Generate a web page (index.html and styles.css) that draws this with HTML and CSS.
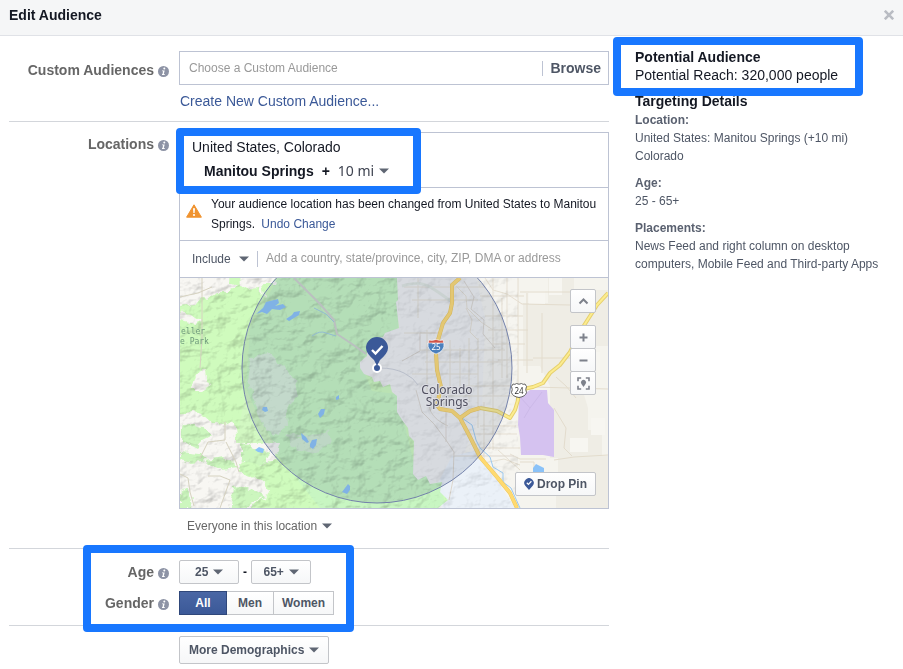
FILE: index.html
```html
<!DOCTYPE html>
<html lang="en">
<head>
<meta charset="utf-8">
<title>Edit Audience</title>
<meta name="viewport" content="width=device-width, initial-scale=1">
<link rel="stylesheet" href="styles.css">
</head>
<body>
<svg width="0" height="0" class="sprite" aria-hidden="true">
  <symbol id="caret" viewBox="0 0 10 6"><path d="M0 0.5h10L5 5.5z" fill="currentColor"/></symbol>
  <symbol id="info" viewBox="0 0 11 11"><circle cx="5.5" cy="5.5" r="5.5" fill="#8d93a5"/><circle cx="6.3" cy="2.6" r="1" fill="#fff"/><path d="M4 4.4h2.7L5.8 8h.9v.9H4V8h.5l.6-2.7H4z" fill="#fff"/></symbol>
</svg>

<header class="titlebar">
  <h1>Edit Audience</h1>
  <button class="close" type="button" aria-label="Close">
    <svg width="10" height="10" viewBox="0 0 10 10"><path d="M.8 .8l8.400 8.400M9.200 .8L.8 9.200" stroke="#b9bcc3" stroke-width="2.6"/></svg>
  </button>
</header>

<main class="dialog">
  <form class="form">
    <section class="row row-custom">
      <label class="label label-tall" for="custom">Custom Audiences <svg class="info"><use href="#info"/></svg></label>
      <div class="field">
        <div class="picker">
          <input id="custom" type="text" placeholder="Choose a Custom Audience">
          <button class="browse" type="button">Browse</button>
        </div>
        <a class="create" href="#">Create New Custom Audience...</a>
      </div>
    </section>

    <section class="row row-locations">
      <label class="label" for="place">Locations <svg class="info"><use href="#info"/></svg></label>
      <div class="field">
        <div class="locations">
          <div class="chosen callout">
            <div class="region">United States, Colorado</div>
            <div class="city">
              <strong>Manitou Springs</strong><strong>+</strong>
              <span class="select select-radius">
                <select aria-label="Radius"><option>10 mi</option><option>25 mi</option></select>
                <svg class="caret"><use href="#caret"/></svg>
              </span>
            </div>
          </div>
          <div class="notice">
            <svg class="warn" width="16" height="14" viewBox="0 0 16 14"><path d="M8 .8L15.4 13.2H.6z" fill="#f0932f" stroke="#f0932f" stroke-linejoin="round"/><path d="M7 4.2h2L8.6 9H7.4z" fill="#fff"/><circle cx="8" cy="11" r="1.1" fill="#fff"/></svg>
            <p>Your audience location has been changed from United States to Manitou Springs. <a href="#">Undo Change</a></p>
          </div>
          <div class="search">
            <span class="select select-include">
              <select aria-label="Include or exclude"><option>Include</option><option>Exclude</option></select>
              <svg class="caret"><use href="#caret"/></svg>
            </span>
            <input id="place" type="text" placeholder="Add a country, state/province, city, ZIP, DMA or address">
          </div>
          <div class="map">
            <svg class="map-art" viewBox="0 0 428 230" preserveAspectRatio="xMidYMid slice" role="img" aria-label="Map of Colorado Springs">
              <defs>
                <filter id="relief" x="0" y="0" width="100%" height="100%" color-interpolation-filters="sRGB">
                  <feTurbulence type="fractalNoise" baseFrequency="0.05 0.065" numOctaves="4" seed="8"/>
                  <feColorMatrix values="0 0 0 0 0  0 0 0 0 0  0 0 0 0 0  1.2 0 0 0 0"/>
                  <feDiffuseLighting surfaceScale="4" diffuseConstant="1.25" lighting-color="#fff"><feDistantLight azimuth="225" elevation="52"/></feDiffuseLighting>
                </filter>
                <filter id="ragged"><feTurbulence type="fractalNoise" baseFrequency="0.12" numOctaves="2" seed="3"/><feDisplacementMap in="SourceGraphic" scale="9" xChannelSelector="R" yChannelSelector="G"/></filter>
                <clipPath id="hills"><path d="M0 0H217L218 22 216 24 219 50 205 55 203 59 198 60 190 66 187 70 187 78 180 84 180 90 184 96 192 99 194 104 200 103 203 109 210 106 212 114 217 118 217 134 222 142 228 150 229 158 234 163 233 196 238 202 246 198 250 206 262 204 260 214 268 222 258 230H0z"/></clipPath>
                <clipPath id="town"><path d="M218 0H428V230H258L268 222 262 206 246 200 234 198 233 160 228 150 218 132 215 118 200 106 182 94 180 84 190 66 218 50z"/></clipPath>
              </defs>
              <rect width="428" height="230" fill="#f5f4ee"/>
              <path d="M216 0H296L305 40 302 130 262 230H160V60z" fill="#efeff0"/>
              <path d="M272 178L298 172 335 230H262L258 205z" fill="#e9f0f7"/>
              <g fill="#efede5">
                <path d="M343 25h25V0h26v12h34v56h-32v22l12 40v22h14v50h-44v-22h-8V108l-10-20h-17z"/>
                <path d="M384 178h44v52h-52v-20h8z"/>
              </g>
              <g fill="#f7f6f1"><path d="M349 13h16v13h-16zM369 0h13v17h-13zM402 74h18v18h-18zM411 140h14v17h-14zM390 160h18v14h-18z"/></g>

              <g fill="none" stroke="#e3dccd" stroke-width="1">
                <path d="M224 9h82M232 22h66M224 55h32M240 72h85M245 84h76M232 96h66M285 108h53M262 118h74M300 18h44M305 38h38M308 52h40M312 66h33M318 82h35M300 148h36M282 156h55M300 170h40"/>
                <path d="M238 0v40M247 52v62M270 62v54M280 70v45M289 60v64M298 60v90M304 124v62M313 0v172M322 20v80M327 0v100M338 0v108M347 15v80M362 95v-60M318 172l22 20M340 184h14v26h26M374 182l20-3 34-2M396 120l-10-12-10-9M374 130l12 20-2 20 8 8M353 80h38v-14M340 14h52l10 14M353 109l75 2"/>
                <path d="M276 8l10 10 1 12 14 14 12 8M286 30l6 12-2 12 8 8M304 185l20-4 16 6M305 0l8 12 14 4 15 10 48 1M330 176l10 5h26"/>
              </g>
              <g fill="none" stroke="#d8d1c7" stroke-width="1">
                <path d="M284 3l10 16-3 12 13 11-1 14 12 14M236 112l6 22 12 12 12 16 8 12-1 28-4 20M274 178h60M266 134v30M252 116q-10 20 16 32"/>
                <path d="M262 55h-22v18l-18 10"/>
              </g>
              <path d="M222 8q18-6 30 2t20 14" fill="none" stroke="#dfe5dd" stroke-width="3"/>
              <g clip-path="url(#town)"><rect class="shade shade-soft" width="160" height="230" x="178" filter="url(#relief)"/></g>

              <g clip-path="url(#hills)">
                <rect width="270" height="230" fill="#cffbbd"/>
                <path d="M98 0h120v50l-38 34 12 29 25 3 18 73 25 16 6 25H140L92 170 66 110 70 50z" fill="#c8f6c2"/>
                <g filter="url(#ragged)">
                  <path d="M72 78l16-4 12 12 14 14 4 18-12 12 2 16-10 12-12-4-12-32-6-20z" fill="#d9f0d9"/>
                  <path d="M106 156l14 2 20-2 8-6 2 16-18 10-20-8z" fill="#d3eed2"/>
                  <g fill="#f8f7f3">
                    <path d="M-8-8h58l-1 12 9 3-8 6-12 0-8 7-7-1-4 6-9 2-18 4z"/>
                    <path d="M60-6h40l-5 12-13 0 2 12-7-8-10 2-6-4z"/>
                    <path d="M12 112l5-17 8-4 1 9 4 7-8 5zM-6 34l18 2 8 6-4 4-22-4z"/>
                    <path d="M-8 136l22-2 9 3 9 8 13 1 9-4 2 18 1 5h18l25-1-4 18-18 4-16-2-3 10 20 7 10 9-4 10-10 4-12 18H-8z"/>
                  </g>
                  <g fill="#ccf6be">
                    <path d="M2 148l6-4 6 4 12 3 6 7-10 5-6 7-8-4-6-5zM0 174l20 2 7 6-15 2-12-3zM26 183l15-3 12 3 7 6-20 2zM62 165l16 6 12 4-4 9-16 4-8-7zM0 215l6-4 8 10-6 9H0zM54 210l10-2 22 10-16 7-12 7-8 0z"/>
                  </g>
                </g>
                <path d="M66 112l14 30 14 23H56z" fill="#d2f8c2"/>
                <rect class="shade" width="270" height="230" filter="url(#relief)"/>
                <g fill="none" stroke="#d6d2c0" stroke-width="1"><path d="M22 0v60l-2 30M0 19l18-4 14-6M0 196l8 4 2 14 4 14M45 144v18l-17 2-8 16M46 164l10 20 3 10M50 202l-10-4-12 0M50 202l-5 14-5 14"/></g>
                <path d="M114 0l8 8 18 18 14 16 3 14 15 10 14 10" fill="none" stroke="#cfd2cc" stroke-width="2"/>
                <path d="M134 30l12 6 8 8M132 58q8-6 14-3l10 3" fill="none" stroke="#9fcce0" stroke-width="1"/>
              </g>
              <path d="M200 90q14 0 24 5t14 12" fill="none" stroke="#cdd0d8" stroke-width="1"/>

              <g fill="#8ac2f8">
                <path d="M76 36l7-6 3-6 12-3 1 4-4 3 8-2 3 3-6 3-8-1-5 5-5-2zM106 41l6-4 2-3 6-1-1 4-5 3-5 3z"/>
                <path d="M83 129h4l1 4-3 1-3-2zM138 136l3-5 4 0-1 5-4 4zM121 155l5 4 3 5-2 1-5-4zM130 166l2-4 5-1-1 6-3 4-3-2zM156 119l3-2v4l-3 1zM75 172l4-3 5 2-1 4-5-1zM162 214l6-8 2 2v4l-3 4zM353 190l3-4 4 2 4 2v5h-11z"/>
              </g>
              <path d="M339 120l11-8h17l1 13 6 7v47l-11-2h-22l-1-18-2-12z" fill="#d5c2f0"/>
              <path d="M341 120l9 10 12-16M344 140l6-10" fill="none" stroke="#ccb9e8"/>
              <path d="M282 140l10 7 4 15 4 8 10 9 3 10 10 6 0 9 8 6 9 20" fill="none" stroke="#9ac8ef" stroke-width="1"/>

              <g fill="none" stroke-linejoin="round">
                <path d="M300 130l17 3 13 7 5-8 3-10v-10l15-3 10-4 7-10 10-8 10-13 13-25 9-14 5-8 11-12" stroke="#e5cf6e" stroke-width="4"/>
                <path d="M300 130l17 3 13 7 5-8 3-10v-10l15-3 10-4 7-10 10-8 10-13 13-25 9-14 5-8 11-12" stroke="#fcec8e" stroke-width="2"/>
                <path d="M280 0l-8 7v18l-2 10-7 10-5 17-2 13 1 17 4 17-4 18 3 4 12 2 8 7 10 19 10 20 17 20 13 16 7 15M280 140l10-7 10-3" stroke="#ecc65a" stroke-width="4"/>
                <path d="M280 0l-8 7v18l-2 10-7 10-5 17-2 13 1 17 4 17-4 18 3 4 12 2 8 7 10 19 10 20 17 20 13 16 7 15M280 140l10-7 10-3" stroke="#ffda70" stroke-width="3"/>
              </g>

              <circle cx="197" cy="90" r="135" fill="#4e6484" fill-opacity=".16" stroke="#7482ab"/>

              <g class="map-park"><text x="1" y="56">eller</text><text x="0" y="66">e Park</text></g>
              <text class="map-city"><tspan x="267" y="116">Colorado</tspan><tspan x="267" y="128">Springs</tspan></text>

              <path d="M249 62q3 1 7-.6q4 1.600 7 .6l1 4h-16z" fill="#cf5549" stroke="#fff" stroke-width=".6"/>
              <path d="M248 65h16q1 8-8 11q-9-3-8-11z" fill="#4a7fbd" stroke="#fff" stroke-width=".6"/>
              <text class="map-i25" x="256" y="72">25</text>
              <path d="M333 106q2 1 3.500-.5q2.500 1.500 5 0q1.500 1.500 3.500.5l1.500 2.500q-1.500 3 0 6q-1 4-7.500 5q-6.500-1-7.500-5q1.500-3 0-6z" fill="#fff" stroke="#555" stroke-width=".9"/>
              <text class="map-us24" x="339" y="116">24</text>

              <circle cx="197" cy="90" r="4" fill="#3b5998" stroke="#fff" stroke-width="2"/>
              <path d="M197 88l-3-6q-8-7-8-12a11 11 0 0 1 22 0q0 5-8 12z" fill="#3b5998"/>
              <path d="M192 72l3.500 3.500 7-7.500" fill="none" stroke="#fff" stroke-width="2.400"/>
            </svg>
            <div class="map-tools">
              <button type="button" class="btn tool" aria-label="Collapse map"><svg width="11" height="11" viewBox="0 0 11 11"><path d="M1.500 7.500l4-4 4 4" fill="none" stroke="#7d818b" stroke-width="2"/></svg></button>
              <div class="zoom">
                <button type="button" class="btn tool" aria-label="Zoom in"><svg width="11" height="11" viewBox="0 0 11 11"><path d="M1.500 5.500h8M5.500 1.500v8" stroke="#7d818b" stroke-width="2"/></svg></button>
                <button type="button" class="btn tool" aria-label="Zoom out"><svg width="11" height="11" viewBox="0 0 11 11"><path d="M1.500 5.500h8" stroke="#7d818b" stroke-width="2"/></svg></button>
                <button type="button" class="btn tool" aria-label="Fit to pins"><svg width="13" height="13" viewBox="0 0 13 13"><path d="M1 4.200V1h3.200M8.800 1H12v3.200M12 8.800V12H8.800M4.200 12H1V8.800" fill="none" stroke="#7d818b" stroke-width="1.600"/><path d="M6.500 10L4.300 6.800a2.600 2.600 0 1 1 4.400 0z" fill="#7d818b"/></svg></button>
              </div>
            </div>
            <button type="button" class="btn drop"><svg width="10" height="12" viewBox="0 0 10 12"><path d="M5 12L1.300 7.800a4.700 4.700 0 1 1 7.400 0z" fill="#3b5998"/><path d="M2.800 4.800l1.600 1.600 3-3.200" fill="none" stroke="#fff" stroke-width="1.300"/></svg>Drop Pin</button>
          </div>
        </div>
        <span class="select select-who">
          <select aria-label="People in location"><option>Everyone in this location</option><option>Recently in this location</option></select>
          <svg class="caret"><use href="#caret"/></svg>
        </span>
      </div>
    </section>

    <section class="people">
      <div class="people-rows callout">
        <div class="row">
          <label class="label" for="age-min">Age <svg class="info"><use href="#info"/></svg></label>
          <div class="field ages">
            <span class="select select-age btn">
              <select id="age-min"><option>25</option><option>30</option></select>
              <svg class="caret"><use href="#caret"/></svg>
            </span>
            <span class="dash">-</span>
            <span class="select select-age btn">
              <select aria-label="Maximum age"><option>65+</option><option>60</option></select>
              <svg class="caret"><use href="#caret"/></svg>
            </span>
          </div>
        </div>
        <div class="row">
          <span class="label" id="gender">Gender <svg class="info"><use href="#info"/></svg></span>
          <div class="field segments" role="group" aria-labelledby="gender">
            <button type="button" class="btn on" aria-pressed="true">All</button>
            <button type="button" class="btn" aria-pressed="false">Men</button>
            <button type="button" class="btn" aria-pressed="false">Women</button>
          </div>
        </div>
      </div>
    </section>

    <section class="row row-more">
      <div class="label"></div>
      <div class="field"><button type="button" class="btn more">More Demographics <svg class="caret"><use href="#caret"/></svg></button></div>
    </section>
  </form>

  <aside class="summary">
    <div class="reach callout">
      <h2>Potential Audience</h2>
      <p>Potential Reach: 320,000 people</p>
    </div>
    <h2>Targeting Details</h2>
    <dl>
      <dt>Location:</dt>
      <dd>United States: Manitou Springs (+10 mi)<br>Colorado</dd>
      <dt>Age:</dt>
      <dd>25 - 65+</dd>
      <dt>Placements:</dt>
      <dd>News Feed and right column on desktop computers, Mobile Feed and Third-party Apps</dd>
    </dl>
  </aside>
</main>
</body>
</html>
```
FILE: styles.css
```css
*, *::after { box-sizing: border-box; }

body {
  margin: 0;
  background: #fff;
  color: #141823;
  font: 12px/18px "Liberation Sans", Arial, sans-serif;
}

h1, h2, p, dl, dd { margin: 0; }
button, input, select { font: inherit; color: inherit; margin: 0; }
button, select { cursor: pointer; }
a { color: #3b5998; text-decoration: none; }
.sprite { position: absolute; }

.titlebar {
  display: flex;
  align-items: center;
  justify-content: space-between;
  height: 36px;
  padding: 0 8px 5px 9px;
  background: #f5f6f7;
  border-bottom: 1px solid #e0e2e7;
}
.titlebar h1 { font-size: 14px; }
.close { display: flex; padding: 1px; border: 0; background: none; }

.dialog { display: flex; gap: 4px; padding-left: 9px; }
.form { flex: 1; min-width: 0; }

.row { display: grid; grid-template-columns: 160px minmax(0, 1fr); column-gap: 10px; }
.row-custom { padding: 15px 0 11px; }
.row-locations { padding: 10px 0 13px; border-top: 1px solid #d3d6db; }
.label {
  display: flex;
  justify-content: flex-end;
  align-items: center;
  gap: 4px;
  height: 24px;
  color: #666;
  font-size: 14px;
  font-weight: bold;
}
.label-tall { height: 38px; }
.info { width: 11px; height: 11px; margin-top: 2px; }
.caret { width: 10px; height: 6px; color: #5f6673; pointer-events: none; }

.picker {
  display: flex;
  align-items: center;
  height: 34px;
  border: 1px solid #bdc3d3;
}
.picker input, .search input {
  flex: 1;
  min-width: 0;
  border: 0;
  padding: 0 9px;
  background: none;
  outline: 0;
}
::placeholder { color: #999; opacity: 1; }
.browse {
  height: 15px;
  padding: 0 7px;
  border: 0;
  border-left: 1px solid #bdc3d3;
  background: none;
  color: #4e5665;
  font-size: 14px;
  font-weight: bold;
  line-height: 14px;
}
.create { display: block; padding: 7px 1px 0; font-size: 14px; }

.callout { position: relative; }
.callout::after {
  content: "";
  position: absolute;
  border: 8px solid #1877ff;
  border-radius: 4px;
  pointer-events: none;
  z-index: 1;
}

.locations { border: 1px solid #bdc3d3; }
.chosen { padding: 2px 12px 4px; font-size: 14px; line-height: 24px; }
.chosen::after { top: -5px; bottom: -7px; left: -4px; width: 245px; }
.city { display: flex; gap: 8px; padding-left: 12px; }

.select { display: inline-flex; align-items: center; }
.select select {
  appearance: none;
  border: 0;
  padding: 0 14px 0 0;
  margin-right: -10px;
  background: none;
  outline: 0;
}
.select-radius { color: #3e4350; font-family: "Noto Sans", sans-serif; }

.notice {
  display: flex;
  gap: 9px;
  padding: 6px;
  border-top: 1px solid #bdc3d3;
  line-height: 20px;
}
.notice a { margin-left: 3px; }
.warn { flex: none; margin-top: 10px; }

.search { display: flex; align-items: center; height: 37px; border-top: 1px solid #bdc3d3; }
.search input { padding: 0 8px 2px; }
.select-include { padding: 0 8px 0 12px; height: 16px; border-right: 1px solid #bdc3d3; color: #4e5665; }
.select .caret { flex: none; }
.select.select-include select { padding-right: 14px; }

.map { position: relative; height: 231px; border-top: 1px solid #bdc3d3; overflow: hidden; }
.map-art { display: block; width: 100%; height: 230px; }
.shade { mix-blend-mode: multiply; opacity: .24; }
.shade-soft { opacity: .12; }
.map-park { fill: #6f9a7c; font: 8px "DejaVu Sans Mono", monospace; }
.map-city {
  fill: #50505f;
  font: 12px "Noto Sans", sans-serif;
  text-anchor: middle;
  paint-order: stroke;
  stroke: #dddee4;
  stroke-width: 2px;
}
.map-i25 { fill: #fff; font: 8px "Noto Sans", sans-serif; text-anchor: middle; }
.map-us24 { fill: #333; font: 8px "Noto Sans", sans-serif; text-anchor: middle; }

.btn {
  border: 1px solid #c3c5c9;
  border-radius: 2px;
  background: linear-gradient(#fff, #f6f7f8);
  color: #4e5665;
  font-weight: bold;
}
.map-tools { position: absolute; top: 11px; right: 12px; display: grid; gap: 12px; }
.zoom { display: grid; }
.tool { display: grid; place-items: center; width: 26px; height: 24px; padding: 0; }
.zoom .tool + .tool { margin-top: -1px; }
.drop {
  position: absolute;
  right: 12px;
  bottom: 12px;
  display: flex;
  align-items: center;
  gap: 3px;
  height: 24px;
  padding: 0 8px;
}

.select-who { display: flex; height: 18px; margin-top: 8px; padding-left: 8px; color: #666; }

.people { padding: 11px 0 10px; border: solid #d3d6db; border-width: 1px 0; }
.people-rows { display: grid; gap: 7px; }
.people-rows::after { top: -15px; bottom: -17px; left: 74px; width: 271px; }
.ages { display: flex; align-items: center; }
.dash { width: 12px; text-align: center; font-weight: bold; }
.select-age { width: 60px; height: 24px; justify-content: center; }
.segments { display: flex; }
.segments .btn { min-width: 47px; height: 24px; padding: 0 8px; border-radius: 0; }
.segments .btn + .btn { border-left: 0; }
.segments .btn.on { min-width: 48px; border-color: #2f477a; background: linear-gradient(#4a67a5, #3b5998); color: #fff; }

.row-more { padding-top: 10px; }
.more { display: flex; align-items: center; gap: 5px; height: 28px; padding: 0 9px; }

.summary { width: 290px; padding: 12px 22px 0; color: #4e5665; }
.summary h2 { font-size: 14px; line-height: 18px; color: #141823; }
.reach { margin-bottom: 8px; }
.reach p { color: #141823; font-size: 14px; line-height: 18px; }
.reach::after { top: -11px; bottom: -12px; left: -22px; width: 250px; }
.summary dl { padding-top: 1px; }
.summary dt { font-weight: bold; color: #5a6170; }
.summary dd { margin-bottom: 9px; }
```
